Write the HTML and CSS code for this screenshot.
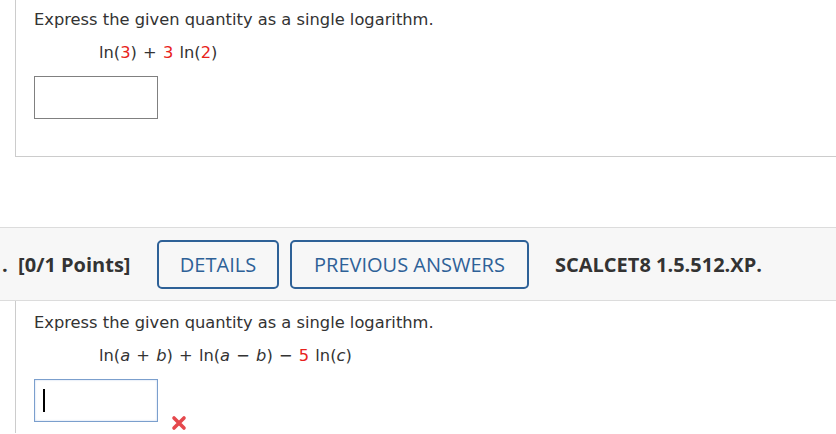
FILE: index.html
```html
<!DOCTYPE html>
<html>
<head>
<meta charset="utf-8">
<link rel="stylesheet" href="styles.css">
</head>
<body>
<div class="question q-first">
  <p class="prompt">Express the given quantity as a single logarithm.</p>
  <p class="math">ln(<span class="red">3</span>) + <span class="red">3</span> ln(<span class="red">2</span>)</p>
  <div class="answer"><span class="input"></span></div>
</div>

<div class="bar">
  <span class="points">.&nbsp; [0/1 Points]</span>
  <span class="btn btn-details">DETAILS</span>
  <span class="btn btn-prev">PREVIOUS ANSWERS</span>
  <span class="ref">SCALCET8 1.5.512.XP.</span>
</div>

<div class="question q-second">
  <p class="prompt">Express the given quantity as a single logarithm.</p>
  <p class="math">ln(<i>a</i> + <i>b</i>) + ln(<i>a</i> &minus; <i>b</i>) &minus; <span class="red">5</span> ln(<i>c</i>)</p>
  <div class="answer">
    <span class="input focused"><span class="caret"></span></span>
    <svg class="xmark" width="16" height="16" viewBox="0 0 16 16"><path d="M3 3 L13 13 M13 3 L3 13" stroke="#e5484d" stroke-width="3.6" stroke-linecap="round"/></svg>
  </div>
</div>
</body>
</html>
```
FILE: styles.css
```css
html, body {
  margin: 0;
  padding: 0;
  background: #fff;
  overflow: hidden;
}
body {
  width: 836px;
  height: 434px;
  font-family: "DejaVu Sans", Verdana, sans-serif;
  color: #333;
}
.question {
  margin-left: 15px;
  border-left: 1px solid #ccc;
  padding-left: 18px;
}
.q-first {
  height: 157px;
  border-bottom: 1px solid #ccc;
  padding-top: 9px;
  box-sizing: border-box;
}
.q-second {
  padding-top: 11px;
  height: 132px;
  box-sizing: border-box;
}
.prompt {
  margin: 0;
  font-size: 16.3px;
  line-height: 21px;
  color: #333;
}
.math {
  margin: 12px 0 0 65px;
  font-size: 16.3px;
  line-height: 21px;
  word-spacing: 1px;
  color: #333;
}
.red { color: #e8221b; }
.answer {
  margin-top: 13px;
  display: flex;
  align-items: flex-end;
}
.input {
  display: block;
  width: 122px;
  height: 41px;
  border: 1px solid #808080;
  background: #fff;
  position: relative;
}
.input.focused {
  border-color: #7b9fcd;
  box-shadow: inset 0 0 2px #b9cdea;
}
.caret {
  position: absolute;
  left: 8px;
  top: 9px;
  width: 2px;
  height: 23px;
  background: #000;
}
.xmark {
  margin-left: 13px;
  margin-bottom: -9px;
}
.bar {
  margin-top: 70px;
  height: 72px;
  background: #f7f7f7;
  border-top: 1px solid #dcdcdc;
  border-bottom: 1px solid #dcdcdc;
  display: flex;
  align-items: center;
  font-family: "Open Sans", sans-serif;
}
.points {
  font-weight: bold;
  font-size: 20px;
  color: #333;
  margin-left: 2px;
  width: 155px;
}
.btn {
  box-sizing: border-box;
  height: 49px;
  border: 2px solid #2e6197;
  border-radius: 5px;
  color: #2e6197;
  font-size: 20px;
  display: flex;
  align-items: center;
  justify-content: center;
  background: #f7f7f7;
}
.btn-details { width: 122px; }
.btn-prev { width: 239px; margin-left: 11px; }
.ref {
  margin-left: 26px;
  font-weight: bold;
  font-size: 20px;
  color: #333;
}
```
